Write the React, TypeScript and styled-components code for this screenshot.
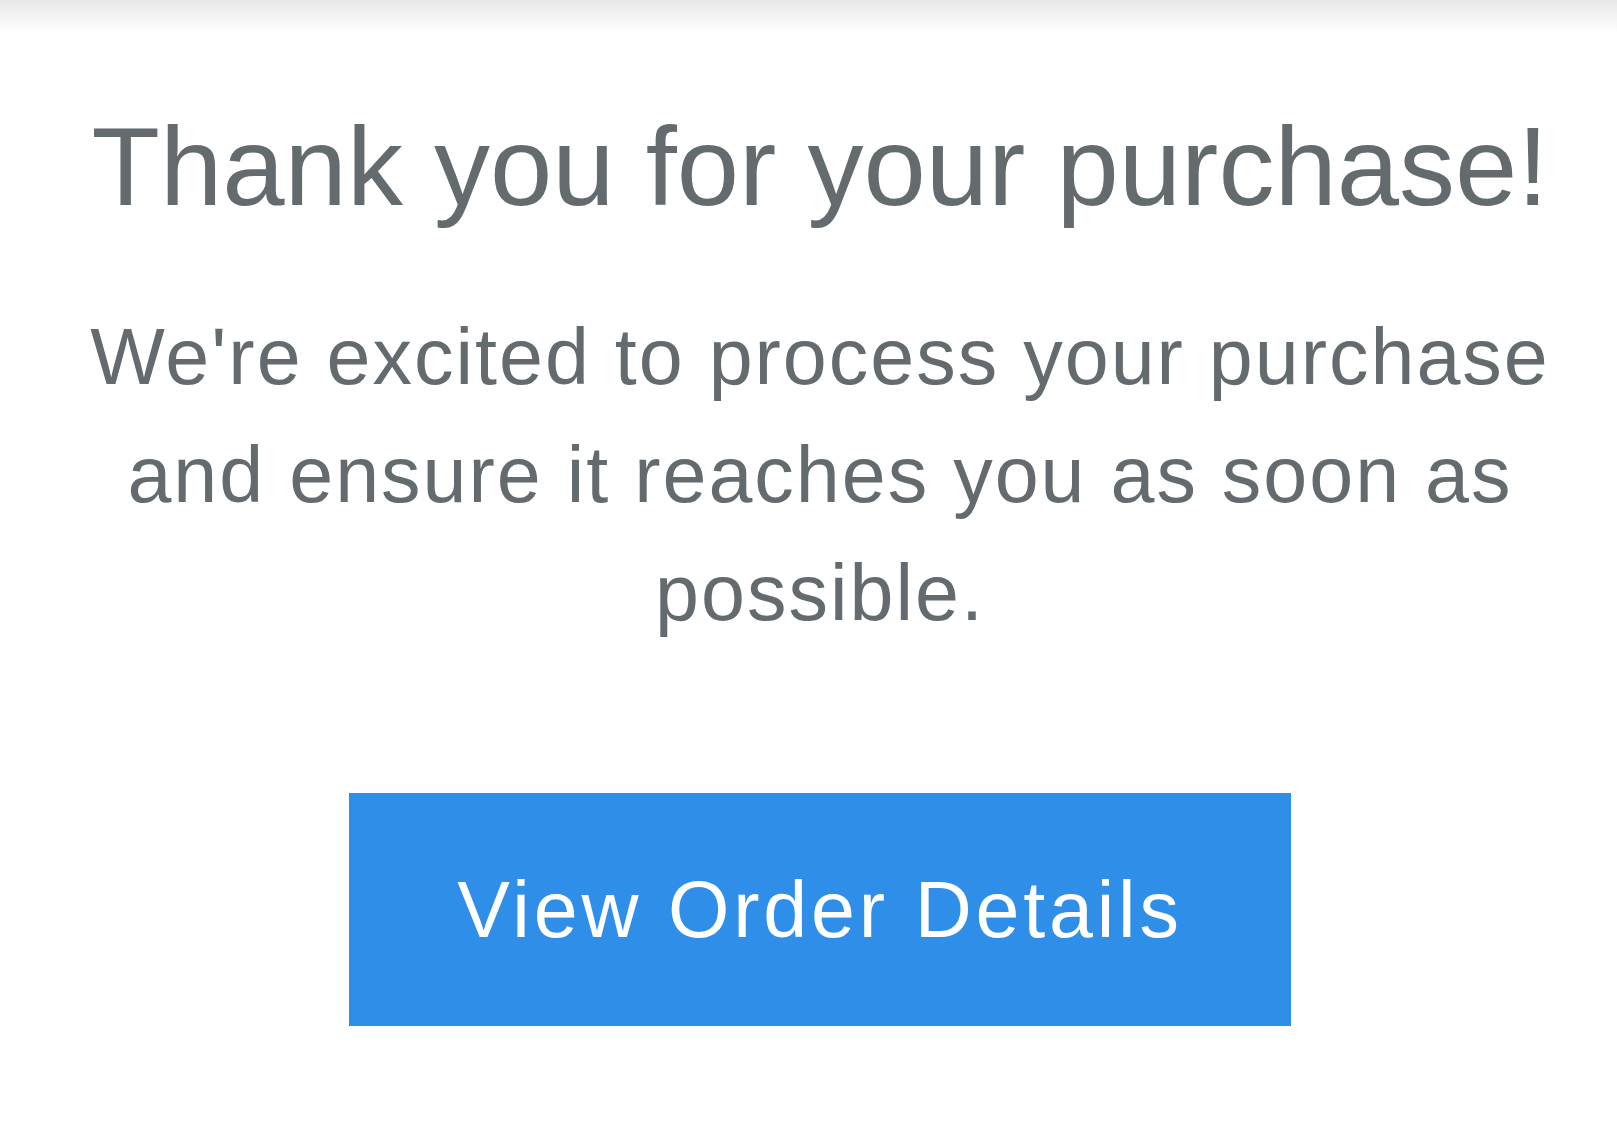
import styled, { createGlobalStyle } from "styled-components";

const GlobalStyle = createGlobalStyle`
  body {
    margin: 0;
    background-color: #ffffff;
    font-family: "Liberation Sans", Arial, Helvetica, sans-serif;
  }
`;

const Page = styled.div`
  width: 100%;
  min-height: 100vh;
  display: flex;
  flex-direction: column;
  background-color: #ffffff;
`;

const TopShade = styled.div`
  height: 34px;
  background: linear-gradient(to bottom, #e7e7e7 0%, #f4f4f4 50%, #ffffff 100%);
`;

const Content = styled.main`
  display: flex;
  flex-direction: column;
  align-items: center;
  padding: 66px 0 0 23px;
`;

const Title = styled.h1`
  margin: 0;
  font-size: 112px;
  font-weight: 400;
  line-height: 134px;
  color: #646b6f;
  text-align: center;
  white-space: nowrap;
`;

const Message = styled.p`
  margin: 64px 0 0;
  width: 1520px;
  font-size: 79px;
  line-height: 118px;
  letter-spacing: 2px;
  color: #646b6f;
  text-align: center;
`;

const Button = styled.button`
  margin-top: 141px;
  width: 942px;
  height: 233px;
  display: flex;
  align-items: center;
  justify-content: center;
  padding: 0;
  background-color: #2e8ee8;
  color: #ffffff;
  border: none;
  border-radius: 0;
  font-family: "Liberation Sans", Arial, Helvetica, sans-serif;
  font-size: 79px;
  letter-spacing: 3.8px;
  cursor: pointer;
`;

const App = () => {
  return (
    <Page>
      <GlobalStyle />
      <TopShade />
      <Content>
        <Title>Thank you for your purchase!</Title>
        <Message>
          We're excited to process your purchase and ensure it reaches you as
          soon as possible.
        </Message>
        <Button>View Order Details</Button>
      </Content>
    </Page>
  );
};

export default App;
